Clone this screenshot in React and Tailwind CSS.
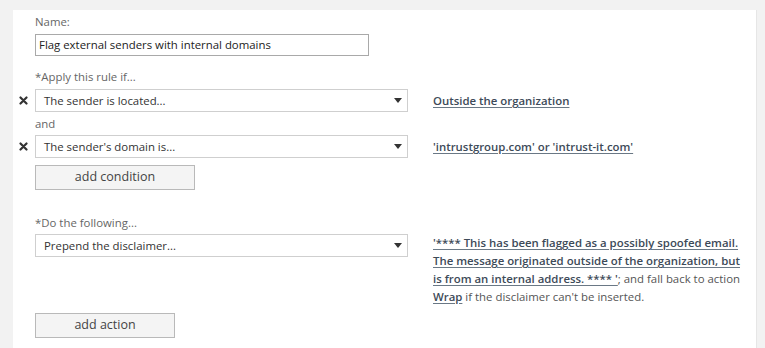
const Arrow = () => (
  <svg width="8" height="5" viewBox="0 0 8 5" className="shrink-0">
    <path d="M0 0 L8 0 L4 5 Z" fill="#333" />
  </svg>
);

const Cross = () => (
  <svg width="9" height="9" viewBox="0 0 9 9" className="shrink-0">
    <path d="M1.5 1.5 L7.5 7.5 M7.5 1.5 L1.5 7.5" stroke="#333" strokeWidth="2.2" strokeLinecap="round" />
  </svg>
);

const Select = ({ text }) => (
  <div className="flex items-center justify-between w-[373px] h-[23px] border border-[#cfcfcf] bg-white pl-[8px] pr-[5px] text-[#333]">
    <span>{text}</span>
    <Arrow />
  </div>
);

const Label = ({ children, className = "" }) => (
  <div className={"h-[18px] leading-[18px] text-[#666] " + className}>{children}</div>
);

const Link = ({ children }) => (
  <span className="font-semibold text-[#3d4a58] underline decoration-[#6a7885] underline-offset-2">{children}</span>
);

const Row = ({ remove, text, children, top = false }) => (
  <div className={"flex gap-[25px] " + (top ? "items-start" : "items-center")}>
    <div className="relative flex items-center">
      {remove && (
        <div className="absolute left-[-16px] top-[7px]">
          <Cross />
        </div>
      )}
      <Select text={text} />
    </div>
    <div className="w-[318px]">{children}</div>
  </div>
);

export default function App() {
  return (
    <div
      className="w-[765px] h-[348px] bg-[#f2f2f2] pt-[10px] pl-[13px] pr-[8px] overflow-hidden text-[11.4px]"
      style={{ fontFamily: "'Open Sans', 'Noto Sans', sans-serif" }}
    >
      <div className="h-full bg-white border-r border-[#e6e6e6] pl-[22px] pt-[3px]">
        <Label>Name:</Label>
        <div className="mt-[3px] w-[334px] h-[22px] border border-[#a9a9a9] px-[3px] leading-[20px] text-[#222]">
          Flag external senders with internal domains
        </div>

        <Label className="mt-[12px]">*Apply this rule if...</Label>
        <div className="mt-[3px]">
          <Row remove text="The sender is located...">
            <Link>Outside the organization</Link>
          </Row>
        </div>
        <Label className="mt-[3px]">and</Label>
        <div className="mt-[2px]">
          <Row remove text="The sender's domain is...">
            <Link>'intrustgroup.com' or 'intrust-it.com'</Link>
          </Row>
        </div>
        <button className="mt-[7px] w-[160px] h-[25px] border border-[#b9b9b9] bg-[#f4f4f4] text-[#444] text-[12.5px] block">
          add condition
        </button>

        <Label className="mt-[24px]">*Do the following...</Label>
        <div className="mt-[2px]">
          <Row text="Prepend the disclaimer..." top>
            <div className="leading-[18px] text-[#555] whitespace-nowrap">
              <div>
                <Link>'**** This has been flagged as a possibly spoofed email.</Link>
              </div>
              <div>
                <Link>The message originated outside of the organization, but</Link>
              </div>
              <div>
                <Link>is from an internal address. **** '</Link>; and fall back to action
              </div>
              <div>
                <Link>Wrap</Link> if the disclaimer can't be inserted.
              </div>
            </div>
          </Row>
        </div>
        <button className="mt-[7px] w-[140px] h-[25px] border border-[#b9b9b9] bg-[#f4f4f4] text-[#444] text-[12.5px] block">
          add action
        </button>
      </div>
    </div>
  );
}
